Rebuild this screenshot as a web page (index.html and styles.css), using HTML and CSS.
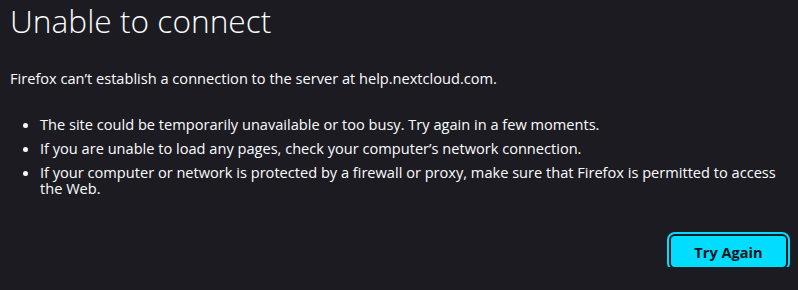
FILE: index.html
```html
<!DOCTYPE html>
<html lang="en">
<head>
<meta charset="utf-8">
<title>Problem loading page</title>
<link rel="stylesheet" href="styles.css">
</head>
<body>
<main class="container">
  <h1 class="title">Unable to connect</h1>
  <p class="intro">Firefox can’t establish a connection to the server at help.nextcloud.com.</p>
  <ul class="tips">
    <li>The site could be temporarily unavailable or too busy. Try again in a few moments.</li>
    <li>If you are unable to load any pages, check your computer’s network connection.</li>
    <li>If your computer or network is protected by a firewall or proxy, make sure that Firefox is permitted to access the Web.</li>
  </ul>
  <div class="actions">
    <button class="primary" type="button">Try Again</button>
  </div>
</main>
</body>
</html>
```
FILE: styles.css
```css
html, body {
  margin: 0;
  padding: 0;
  background: #1c1b22;
  color: #fbfbfe;
  font-family: "Open Sans", "DejaVu Sans", sans-serif;
  font-size: 14.6px;
}
.container {
  padding: 0 12px 0 10px;
}
.title {
  margin: 0;
  padding-top: 1px;
  font-family: "Open Sans Light", "Open Sans", sans-serif;
  font-size: 31.7px;
  font-weight: 300;
  line-height: 40px;
}
.intro {
  margin: 27px 0 0;
  line-height: 20px;
}
.tips {
  margin: 28px 0 0;
  padding-left: 30px;
}
.tips li {
  line-height: 16px;
}
.tips li + li {
  margin-top: 8px;
}
.actions {
  display: flex;
  justify-content: flex-end;
  margin-top: 40px;
}
.primary {
  min-width: 115px;
  height: 31px;
  padding: 0 16px;
  border: none;
  border-radius: 4px;
  background: #00ddff;
  color: #15141a;
  font-family: inherit;
  font-size: 14.6px;
  font-weight: 700;
  outline: 2px solid #00ddff;
  outline-offset: 2px;
}
```
